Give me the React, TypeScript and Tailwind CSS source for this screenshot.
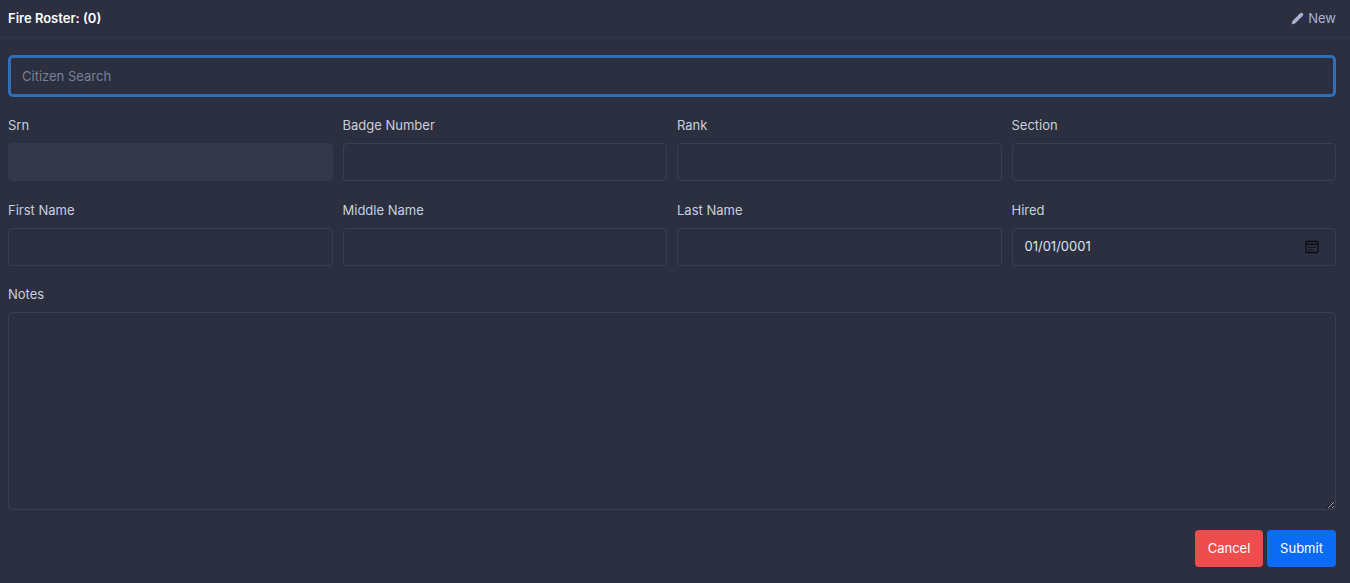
import { Pencil } from "lucide-react";

const inputCls =
  "h-[38px] w-full rounded-[4px] border border-[#3a3f52] bg-[#2b2f40] px-3 text-[13px] text-[#dfe3ec] outline-none";

function Field({ label, disabled, children }: { label: string; disabled?: boolean; children?: React.ReactNode }) {
  return (
    <div className="flex flex-col">
      <label className="mb-[10px] text-[13px] leading-[16px] text-[#c9cfdc]">{label}</label>
      {children ?? (
        <input
          disabled={disabled}
          className={
            disabled
              ? "h-[38px] w-full rounded-[4px] border border-[#353a4c] bg-[#343849] px-3 text-[13px] outline-none"
              : inputCls
          }
        />
      )}
    </div>
  );
}

export default function App() {
  return (
    <div
      className="min-h-[583px] bg-[#2b2f40] text-[#e6e9f0]"
      style={{ fontFamily: "Inter, 'Noto Sans', sans-serif" }}
    >
      <div className="flex h-[38px] items-center justify-between border-b border-[#323648] px-2">
        <span className="text-[13px] font-semibold text-white">Fire Roster: (0)</span>
        <button className="flex items-center gap-1 pr-[6px] text-[13px] text-[#a9b3cf]">
          <Pencil size={13} className="fill-[#a9b3cf]" strokeWidth={1.5} />
          New
        </button>
      </div>

      <div className="pl-2 pr-[14px] pt-[17px]">
        <input
          autoFocus
          placeholder="Citizen Search"
          className="h-[42px] w-full rounded-[5px] border-[3px] border-[#2f6fb8] bg-[#2b2f40] px-[11px] text-[13px] text-[#dfe3ec] outline-none placeholder:text-[#7b8194]"
        />

        <div className="mt-[20px] grid grid-cols-4 gap-x-[10px] gap-y-[21px]">
          <Field label="Srn" disabled />
          <Field label="Badge Number" />
          <Field label="Rank" />
          <Field label="Section" />
          <Field label="First Name" />
          <Field label="Middle Name" />
          <Field label="Last Name" />
          <Field label="Hired">
            <div className={inputCls + " flex items-center justify-between"}>
              <span className="text-[#dfe3ec]">01/01/0001</span>
              <svg width="14" height="14" viewBox="0 0 14 14" fill="none" className="mr-[4px]">
                <rect x="1" y="1.5" width="12" height="11" rx="1" stroke="#0b0d12" strokeWidth="1.3" />
                <line x1="1" y1="4.3" x2="13" y2="4.3" stroke="#0b0d12" strokeWidth="1.3" />
                <rect x="3.5" y="6.5" width="1.5" height="1.5" fill="#0b0d12" />
                <rect x="6.2" y="6.5" width="1.5" height="1.5" fill="#0b0d12" />
                <rect x="9" y="6.5" width="1.5" height="1.5" fill="#0b0d12" />
                <rect x="3.5" y="9" width="1.5" height="1.5" fill="#0b0d12" />
                <rect x="6.2" y="9" width="1.5" height="1.5" fill="#0b0d12" />
              </svg>
            </div>
          </Field>
        </div>

        <div className="mt-[20px] flex flex-col">
          <label className="mb-[10px] text-[13px] leading-[16px] text-[#c9cfdc]">Notes</label>
          <textarea className="h-[198px] w-full rounded-[4px] border border-[#3a3f52] bg-[#2b2f40] px-3 py-2 text-[13px] text-[#dfe3ec] outline-none" />
        </div>

        <div className="mt-[20px] flex justify-end gap-[4px]">
          <button className="h-[37px] w-[68px] rounded-[4px] bg-[#ef4d4d] text-[13px] text-white">Cancel</button>
          <button className="h-[37px] w-[69px] rounded-[4px] bg-[#0a6cf5] text-[13px] text-white">Submit</button>
        </div>
      </div>
    </div>
  );
}
